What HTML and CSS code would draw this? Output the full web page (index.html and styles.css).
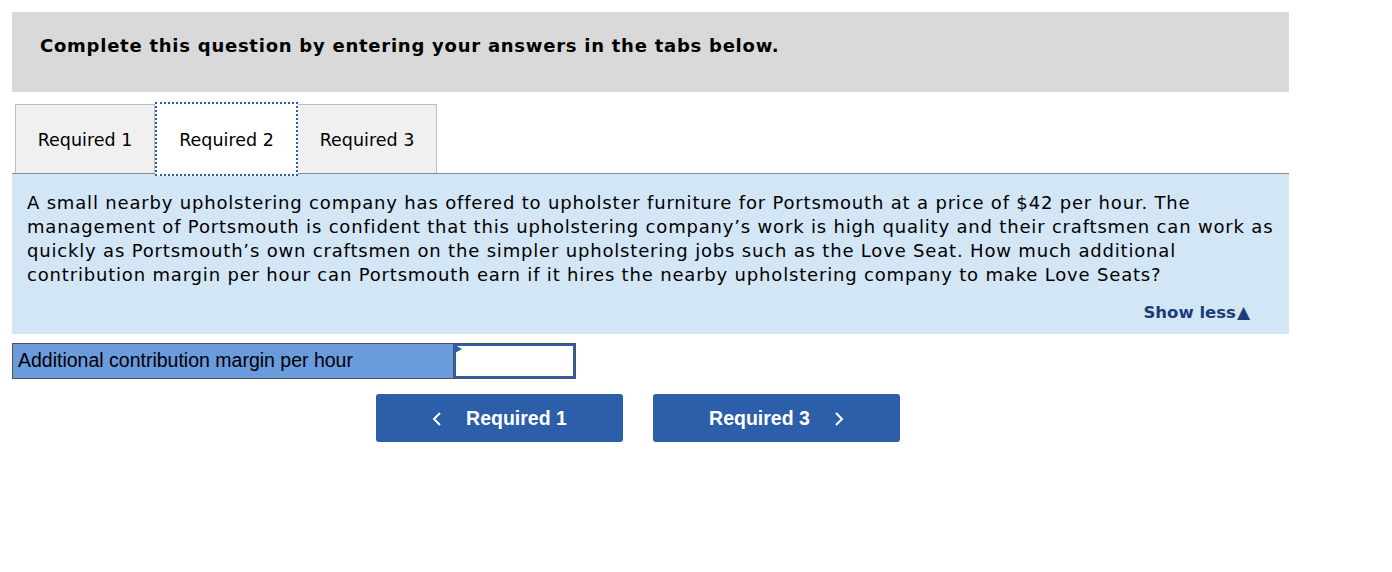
FILE: index.html
```html
<!DOCTYPE html>
<html lang="en">
<head>
  <meta charset="UTF-8">
  <title>Required 2</title>
  <link rel="stylesheet" href="styles.css">
</head>
<body>
<div class="wrap">
  <div class="head">Complete this question by entering your answers in the tabs below.</div>

  <ul class="tabs">
    <li class="tab">Required 1</li>
    <li class="tab active">Required 2</li>
    <li class="tab">Required 3</li>
  </ul>

  <div class="panel">
    <p>A small nearby upholstering company has offered to upholster furniture for Portsmouth at a price of $42 per hour. The management of Portsmouth is confident that this upholstering company’s work is high quality and their craftsmen can work as quickly as Portsmouth’s own craftsmen on the simpler upholstering jobs such as the Love Seat. How much additional contribution margin per hour can Portsmouth earn if it hires the nearby upholstering company to make Love Seats?</p>
    <div class="more"><span>Show less</span><span class="tri">&#9650;</span></div>
  </div>

  <div class="answer">
    <div class="label">Additional contribution margin per hour</div>
    <div class="cell"><input type="text"></div>
  </div>

  <div class="nav">
    <button class="btn"><svg class="arr prev" width="10" height="14" viewBox="0 0 10 14"><path d="M8 1 L2 7 L8 13" fill="none" stroke="#fff" stroke-width="2"/></svg>Required 1</button>
    <button class="btn">Required 3<svg class="arr next" width="10" height="14" viewBox="0 0 10 14"><path d="M2 1 L8 7 L2 13" fill="none" stroke="#fff" stroke-width="2"/></svg></button>
  </div>
</div>
</body>
</html>
```

FILE: styles.css
```css
body, ul, li, p {
  margin: 0;
  padding: 0;
  list-style: none;
}

body {
  background: #fff;
  font-family: "DejaVu Sans", Verdana, sans-serif;
  color: #000;
}

.wrap {
  width: 1277px;
  padding: 12px 0 0 12px;
}

.head {
  height: 80px;
  background: #d9d9d9;
  padding: 0 0 0 28px;
  line-height: 68px;
  font-size: 18px;
  letter-spacing: 0.75px;
  font-weight: bold;
}

.tabs {
  display: flex;
  margin: 11px 0 0 3px;
  height: 70px;
}

.tab {
  width: 138px;
  height: 68px;
  background: #f0f0f0;
  border: 1px solid #bdbdbd;
  border-bottom: none;
  text-align: center;
  line-height: 70px;
  font-size: 17.5px;
  margin-top: 1px;
}

.tab + .tab {
  border-left: none;
}

.tab.active {
  background: #fff;
  width: 139px;
  height: 70px;
  margin-top: -1px;
  border: 2px dotted #2d5ea9;
  line-height: 72px;
  position: relative;
  z-index: 1;
}

.panel {
  background: #d3e6f6;
  border-top: 1px solid #8a8a8a;
  padding: 17px 15px 9px 15px;
}

.panel p {
  font-size: 18px;
  letter-spacing: 0.82px;
  line-height: 24px;
}

.more {
  text-align: right;
  margin: 13px 24px 0 0;
  color: #1b3c78;
  font-weight: bold;
  font-size: 16.5px;
  line-height: 24px;
}

.tri {
  font-size: 17px;
  margin-left: 1px;
}

.answer {
  display: flex;
  margin-top: 9px;
  height: 36px;
}

.label {
  width: 442px;
  background: #6a9bdc;
  border: 1px solid #555;
  font-family: "Liberation Sans", Arial, sans-serif;
  font-size: 19.5px;
  line-height: 33px;
  padding-left: 5px;
  box-sizing: border-box;
}

.cell {
  width: 122px;
  border: 1px solid #555;
  border-left: none;
  box-sizing: border-box;
  position: relative;
}

.cell input {
  width: 100%;
  height: 100%;
  box-sizing: border-box;
  border: 2px solid #2d5ea9;
  margin: 0;
  outline: none;
}

.cell::before {
  content: "";
  position: absolute;
  left: 1px;
  top: 1px;
  border-left: 7px solid #2d5ea9;
  border-top: 4px solid transparent;
  border-bottom: 4px solid transparent;
}

.nav {
  display: flex;
  gap: 30px;
  margin: 15px 0 0 364px;
}

.btn {
  width: 247px;
  height: 48px;
  background: #2d5ea9;
  border: none;
  border-radius: 3px;
  color: #fff;
  font-family: "Liberation Sans", Arial, sans-serif;
  font-weight: bold;
  font-size: 19.5px;
  line-height: 44px;
  padding: 0;
}

.arr {
  display: inline-block;
  vertical-align: -1px;
}

.arr.prev {
  margin-right: 24px;
}

.arr.next {
  margin-left: 24px;
}
```
